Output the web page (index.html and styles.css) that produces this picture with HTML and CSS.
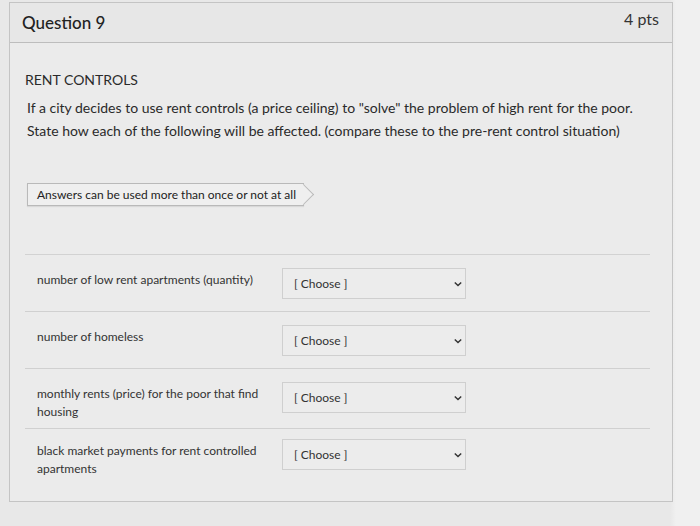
FILE: index.html
```html
<!DOCTYPE html>
<html>
<head>
<meta charset="utf-8">
<link rel="stylesheet" href="styles.css">
</head>
<body>
<div class="page">
  <div class="card">
    <div class="card-header">
      <span class="q-title">Question 9</span>
      <span class="q-pts">4 pts</span>
    </div>
    <div class="card-body">
      <p class="heading">RENT CONTROLS</p>
      <p class="prompt">If a city decides to use rent controls (a price ceiling) to "solve" the problem of high rent for the poor. State how each of the following will be affected. (compare these to the pre-rent control situation)</p>
      <div class="pill">Answers can be used more than once or not at all</div>
      <div class="rows">
        <div class="row">
          <div class="label">number of low rent apartments (quantity)</div>
          <div class="select"><span>[ Choose ]</span><svg class="chev" viewBox="0 0 10 6" width="8" height="6"><path d="M1 1 L5 5 L9 1" fill="none" stroke="#333" stroke-width="1.8"/></svg></div>
        </div>
        <div class="row">
          <div class="label">number of homeless</div>
          <div class="select"><span>[ Choose ]</span><svg class="chev" viewBox="0 0 10 6" width="8" height="6"><path d="M1 1 L5 5 L9 1" fill="none" stroke="#333" stroke-width="1.8"/></svg></div>
        </div>
        <div class="row">
          <div class="label">monthly rents (price) for the poor that find housing</div>
          <div class="select"><span>[ Choose ]</span><svg class="chev" viewBox="0 0 10 6" width="8" height="6"><path d="M1 1 L5 5 L9 1" fill="none" stroke="#333" stroke-width="1.8"/></svg></div>
        </div>
        <div class="row last">
          <div class="label">black market payments for rent controlled apartments</div>
          <div class="select"><span>[ Choose ]</span><svg class="chev" viewBox="0 0 10 6" width="8" height="6"><path d="M1 1 L5 5 L9 1" fill="none" stroke="#333" stroke-width="1.8"/></svg></div>
        </div>
      </div>
    </div>
  </div>
</div>
</body>
</html>
```

FILE: styles.css
```css
html, body {
  margin: 0;
  padding: 0;
}
body {
  width: 700px;
  height: 526px;
  overflow: hidden;
  background: #e7e7e7;
  font-family: Lato, "Open Sans", sans-serif;
  color: #2b2b2b;
}
.page {
  padding: 2px 0 0 9px;
  background: linear-gradient(to right, #e8e8e8 0, #e8e8e8 670px, #f0f0f0 676px);
  height: 524px;
}
.card {
  width: 662px;
  border: 1px solid #c4c4c4;
  background: #ebebeb;
}
.card-header {
  height: 39px;
  background: #e7e7e7;
  border-bottom: 1px solid #bdbdbd;
  display: flex;
  justify-content: space-between;
  align-items: flex-start;
  padding: 0 13px 0 12px;
}
.q-title {
  font-size: 17px;
  font-weight: 500;
  color: #222;
  margin-top: 9px;
}
.q-pts {
  font-size: 16px;
  color: #333;
  margin-top: 6px;
}
.card-body {
  padding: 28px 22px 24px 15px;
}
.heading {
  margin: 0 0 8px 0;
  font-size: 14px;
  color: #2a2a2a;
}
.prompt {
  margin: 0 0 0 2px;
  font-size: 14px;
  line-height: 23px;
  color: #2a2a2a;
}
.pill {
  display: inline-block;
  position: relative;
  z-index: 0;
  margin: 41px 0 0 2px;
  padding: 3px 8px 3px 9px;
  font-size: 12px;
  line-height: 15px;
  color: #222;
  background: #efefef;
  border: 1px solid #b9b9b9;
  border-right: none;
  box-shadow: 0 1px 1px rgba(0,0,0,0.08);
}
.pill::after {
  content: "";
  position: absolute;
  z-index: -1;
  top: 3px;
  right: -7px;
  width: 14px;
  height: 14px;
  background: #efefef;
  border-top: 1px solid #b9b9b9;
  border-right: 1px solid #b9b9b9;
  transform: rotate(45deg);
}
.rows {
  margin-top: 48px;
  border-top: 1px solid #d2d2d2;
}
.row {
  display: flex;
  align-items: flex-start;
  border-bottom: 1px solid #d0d0d0;
  padding: 13px 0 12px 0;
}
.row.last {
  border-bottom: none;
  padding: 10px 0 4px 0;
}
.label {
  width: 245px;
  padding: 3px 0 0 12px;
  margin-bottom: -5px;
  font-size: 12px;
  line-height: 18px;
  color: #333;
}
.select {
  width: 184px;
  height: 31px;
  box-sizing: border-box;
  border: 1px solid #cfcfcf;
  background: #ececec;
  display: flex;
  align-items: center;
  justify-content: space-between;
  padding: 0 3px 0 11px;
  font-size: 12px;
  color: #333;
}
.chev {
  display: block;
}
```
